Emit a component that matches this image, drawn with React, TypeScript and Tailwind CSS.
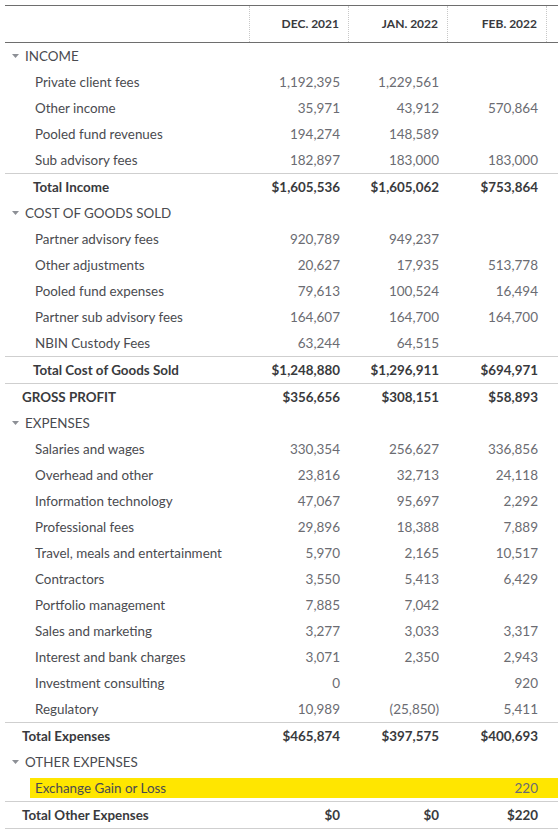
type Row =
  | { kind: 'section'; label: string }
  | { kind: 'item'; label: string; values: string[]; highlight?: boolean }
  | { kind: 'total'; label: string; values: string[]; indent?: boolean; border?: boolean };

const rows: Row[] = [
  { kind: 'section', label: 'INCOME' },
  { kind: 'item', label: 'Private client fees', values: ['1,192,395', '1,229,561', ''] },
  { kind: 'item', label: 'Other income', values: ['35,971', '43,912', '570,864'] },
  { kind: 'item', label: 'Pooled fund revenues', values: ['194,274', '148,589', ''] },
  { kind: 'item', label: 'Sub advisory fees', values: ['182,897', '183,000', '183,000'] },
  { kind: 'total', label: 'Total Income', values: ['$1,605,536', '$1,605,062', '$753,864'], indent: true, border: true },
  { kind: 'section', label: 'COST OF GOODS SOLD' },
  { kind: 'item', label: 'Partner advisory fees', values: ['920,789', '949,237', ''] },
  { kind: 'item', label: 'Other adjustments', values: ['20,627', '17,935', '513,778'] },
  { kind: 'item', label: 'Pooled fund expenses', values: ['79,613', '100,524', '16,494'] },
  { kind: 'item', label: 'Partner sub advisory fees', values: ['164,607', '164,700', '164,700'] },
  { kind: 'item', label: 'NBIN Custody Fees', values: ['63,244', '64,515', ''] },
  { kind: 'total', label: 'Total Cost of Goods Sold', values: ['$1,248,880', '$1,296,911', '$694,971'], indent: true, border: true },
  { kind: 'total', label: 'GROSS PROFIT', values: ['$356,656', '$308,151', '$58,893'], border: true },
  { kind: 'section', label: 'EXPENSES' },
  { kind: 'item', label: 'Salaries and wages', values: ['330,354', '256,627', '336,856'] },
  { kind: 'item', label: 'Overhead and other', values: ['23,816', '32,713', '24,118'] },
  { kind: 'item', label: 'Information technology', values: ['47,067', '95,697', '2,292'] },
  { kind: 'item', label: 'Professional fees', values: ['29,896', '18,388', '7,889'] },
  { kind: 'item', label: 'Travel, meals and entertainment', values: ['5,970', '2,165', '10,517'] },
  { kind: 'item', label: 'Contractors', values: ['3,550', '5,413', '6,429'] },
  { kind: 'item', label: 'Portfolio management', values: ['7,885', '7,042', ''] },
  { kind: 'item', label: 'Sales and marketing', values: ['3,277', '3,033', '3,317'] },
  { kind: 'item', label: 'Interest and bank charges', values: ['3,071', '2,350', '2,943'] },
  { kind: 'item', label: 'Investment consulting', values: ['0', '', '920'] },
  { kind: 'item', label: 'Regulatory', values: ['10,989', '(25,850)', '5,411'] },
  { kind: 'total', label: 'Total Expenses', values: ['$465,874', '$397,575', '$400,693'], border: true },
  { kind: 'section', label: 'OTHER EXPENSES' },
  { kind: 'item', label: 'Exchange Gain or Loss', values: ['', '', '220'], highlight: true },
  { kind: 'total', label: 'Total Other Expenses', values: ['$0', '$0', '$220'], border: true },
];

const cols = 'grid grid-cols-[245px_99px_99px_99px_11px]';

function Caret() {
  return (
    <svg width="7" height="4" viewBox="0 0 7 4" className="mr-[6px]">
      <path d="M0 0 L7 0 L3.5 4 Z" fill="#8d9096" />
    </svg>
  );
}

function Cell({ children, bold }: { children: string; bold?: boolean }) {
  return (
    <div
      className={`flex items-center justify-end pr-[9px] ${
        bold ? 'font-bold text-[#393a3d]' : 'text-[13.5px] text-[#6b6c72]'
      }`}
    >
      {children}
    </div>
  );
}

export default function App() {
  return (
    <div
      className="w-[560px] h-[830px] bg-white pl-[5px] pt-[5px] overflow-hidden text-[13.4px]"
      style={{ fontFamily: 'Lato, "Open Sans", sans-serif' }}
    >
      <div className="w-[553px]">
        {/* Column headers */}
        <div className={`${cols} h-[38px] border-t border-b border-[#6e6e6e]`}>
          <div className="border-r border-dotted border-[#c8c8c8]" />
          {['DEC. 2021', 'JAN. 2022', 'FEB. 2022'].map(h => (
            <div
              key={h}
              className="flex items-center justify-end pr-[9px] border-r border-dotted border-[#c8c8c8] text-[12px] font-bold text-[#393a3d]"
            >
              {h}
            </div>
          ))}
          <div />
        </div>

        {rows.map((r, i) => {
          if (r.kind === 'section') {
            return (
              <div key={i} className="h-[26px] flex items-center pl-[7px] text-[#4a4b50]">
                <Caret />
                {r.label}
              </div>
            );
          }
          if (r.kind === 'item') {
            return (
              <div key={i} className="h-[26px] py-[3px] pl-[25px]">
                <div
                  className={`grid grid-cols-[220px_99px_99px_99px_3px] h-full ${
                    r.highlight ? 'bg-[#ffe600]' : ''
                  }`}
                >
                  <div className="flex items-center pl-[5px] text-[#4a4b50]">{r.label}</div>
                  {r.values.map((v, j) => (
                    <Cell key={j}>{v}</Cell>
                  ))}
                  <div />
                </div>
              </div>
            );
          }
          return (
            <div
              key={i}
              className={`${cols} ${r.border ? 'h-[27px] border-t border-[#cfcfcf]' : 'h-[26px]'}`}
            >
              <div
                className={`flex items-center font-bold text-[#393a3d] ${
                  r.indent ? 'pl-[28px]' : 'pl-[17px]'
                }`}
              >
                {r.label}
              </div>
              {r.values.map((v, j) => (
                <Cell key={j} bold>
                  {v}
                </Cell>
              ))}
              <div />
            </div>
          );
        })}
        <div className="border-t border-[#cfcfcf]" />
      </div>
    </div>
  );
}
